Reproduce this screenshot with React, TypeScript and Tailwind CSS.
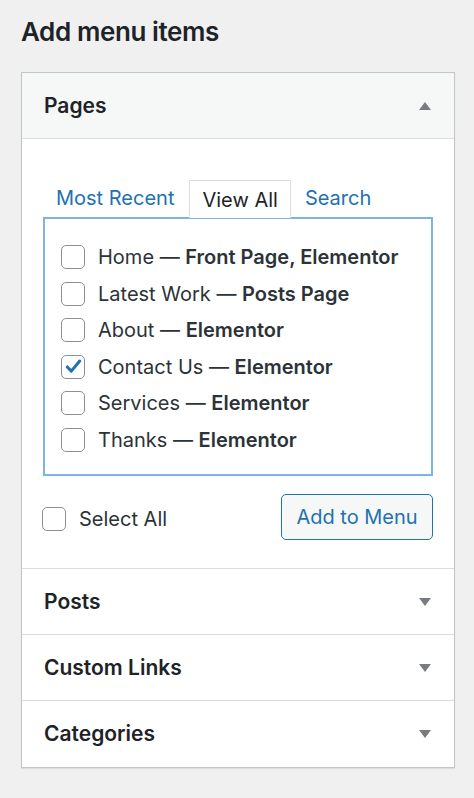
import { useState } from 'react';

const pages = [
  { title: 'Home', meta: 'Front Page, Elementor' },
  { title: 'Latest Work', meta: 'Posts Page' },
  { title: 'About', meta: 'Elementor' },
  { title: 'Contact Us', meta: 'Elementor' },
  { title: 'Services', meta: 'Elementor' },
  { title: 'Thanks', meta: 'Elementor' },
];

function Box({ checked, onClick }: { checked: boolean; onClick: () => void }) {
  return (
    <button
      onClick={onClick}
      className="w-6 h-6 shrink-0 rounded-[5px] border-[1.5px] border-[#8c8f94] bg-white flex items-center justify-center"
    >
      {checked && (
        <svg width="19" height="19" viewBox="0 0 20 20">
          <path d="M3.5 10.5l4.2 4.4L16.5 4.2" fill="none" stroke="#2271b1" strokeWidth="3.2" strokeLinecap="round" strokeLinejoin="round" />
        </svg>
      )}
    </button>
  );
}

function Caret({ up }: { up?: boolean }) {
  return (
    <svg width="14" height="10" viewBox="0 0 14 10">
      <path d={up ? 'M7 1L13 9H1z' : 'M1 1h12L7 9z'} fill="#787c82" />
    </svg>
  );
}

export default function App() {
  const [checked, setChecked] = useState<boolean[]>([false, false, false, true, false, false]);
  const [all, setAll] = useState(false);
  const [tab, setTab] = useState('all');

  const tabs = [
    { id: 'recent', label: 'Most Recent' },
    { id: 'all', label: 'View All' },
    { id: 'search', label: 'Search' },
  ];

  return (
    <div className="w-[474px] h-[798px] bg-[#f0f0f1] pt-[14px] px-[21px] text-[#1d2327] font-['Inter','Noto_Sans',sans-serif]">
      <h1 className="text-[26px] leading-[36px] font-semibold tracking-[-0.4px]">Add menu items</h1>

      <div className="mt-[22px] w-[434px] bg-white border border-[#c3c4c7] shadow-[0_1px_1px_rgba(0,0,0,0.08)]">
        {/* Pages (open) */}
        <div className="h-[66px] bg-[#f6f7f7] border-b border-[#dcdcde] flex items-center justify-between pl-[22px] pr-[22px]">
          <span className="text-[21px] font-semibold">Pages</span>
          <Caret up />
        </div>

        <div className="px-[21px] pt-[40px] pb-[28px] border-b border-[#dcdcde]">
          <div className="flex items-end pl-[13px] text-[20px]">
            {tabs.map(t =>
              tab === t.id ? (
                <button
                  key={t.id}
                  onClick={() => setTab(t.id)}
                  className="h-[38px] px-[12px] border border-b-0 border-[#dcdcde] bg-white relative top-[1px] z-10"
                >
                  {t.label}
                </button>
              ) : (
                <button
                  key={t.id}
                  onClick={() => setTab(t.id)}
                  className="h-[38px] px-[14px] first:pl-0 first:pr-[15px] text-[#2271b1]"
                >
                  {t.label}
                </button>
              )
            )}
          </div>

          <div className="h-[259px] border-2 border-[#7cb4e6] pl-[16px] pt-[26px] flex flex-col gap-[12.5px] text-[20px]">
            {pages.map((p, i) => (
              <div key={p.title} className="flex items-center gap-[13px] h-6">
                <Box
                  checked={checked[i]}
                  onClick={() => setChecked(checked.map((c, j) => (j === i ? !c : c)))}
                />
                <span className="text-[#2c3338] whitespace-nowrap">
                  {p.title} — <b className="font-semibold">{p.meta}</b>
                </span>
              </div>
            ))}
          </div>

          <div className="mt-[18px] flex items-center justify-between">
            <div className="flex items-center gap-[13px] pt-[3px] -ml-px">
              <Box checked={all} onClick={() => setAll(!all)} />
              <span className="text-[20px] text-[#2c3338]">Select All</span>
            </div>
            <button className="h-[46px] w-[152px] rounded-[5px] border-[1.5px] border-[#2271b1] bg-[#f6f7f7] text-[#2271b1] text-[20px]">
              Add to Menu
            </button>
          </div>
        </div>

        {['Posts', 'Custom Links', 'Categories'].map((s, i) => (
          <div
            key={s}
            className={`h-[66px] flex items-center justify-between px-[22px] ${i < 2 ? 'border-b border-[#dcdcde]' : ''}`}
          >
            <span className="text-[21px] font-semibold">{s}</span>
            <Caret />
          </div>
        ))}
      </div>
    </div>
  );
}
